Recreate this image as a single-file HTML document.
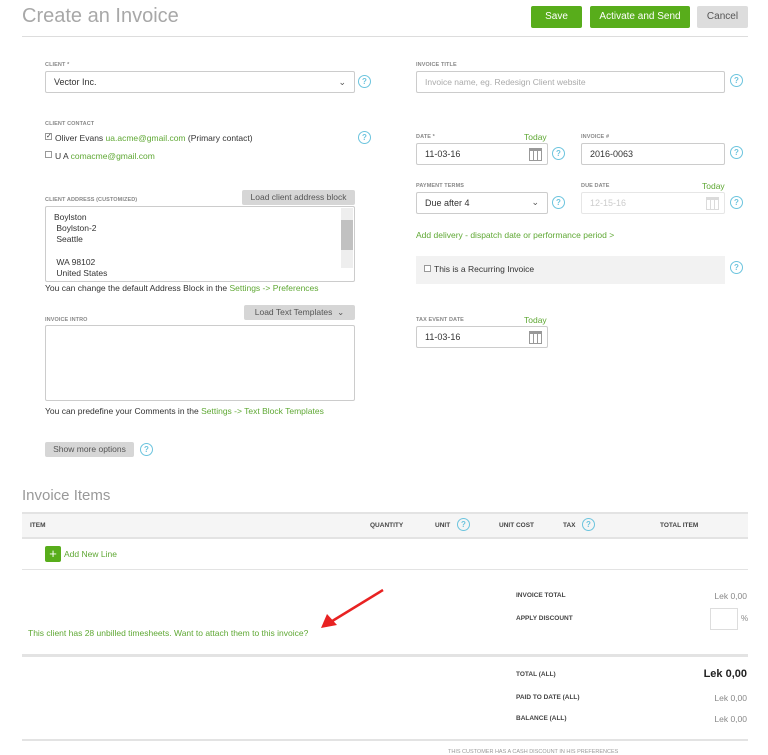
<!DOCTYPE html>
<html><head><meta charset="utf-8"><style>
*{box-sizing:border-box;margin:0;padding:0}
body{width:768px;height:754px;overflow:hidden;background:#fff;font-family:"Liberation Sans",sans-serif;color:#333;position:relative;font-size:9px}
.a{position:absolute;white-space:nowrap}
.lbl{position:absolute;font-size:5.5px;font-weight:bold;color:#888;letter-spacing:.1px}
.inp{position:absolute;border:1px solid #ccc;border-radius:2px;background:#fff;font-size:9px;padding-left:8px;display:flex;align-items:center}
.q{position:absolute;width:13px;height:13px;border:1.3px solid #6cc4de;border-radius:50%;color:#6cc4de;font-size:8px;font-weight:bold;text-align:center;line-height:11px}
.g{color:#5fa834}
.btn{position:absolute;border-radius:2px;color:#fff;font-size:10px;text-align:center;line-height:22px;height:22px}
.gb{position:absolute;background:#d6d6d6;border-radius:2px;color:#555;font-size:8.5px;text-align:center}
.th{position:absolute;font-size:6.5px;font-weight:bold;color:#444;top:522px}
.tl{position:absolute;font-size:6.5px;font-weight:bold;color:#444;left:516px}
.tv{position:absolute;right:21px;font-size:8.5px;color:#888}
.cal{position:absolute;width:13px;height:13px;border:1px solid #999;border-top-width:3px;background:repeating-linear-gradient(90deg,#fff 0 3px,#999 3px 4px)}
</style></head><body>
<div class="a" style="left:22px;top:5px;font-size:20px;color:#a8a8a8;font-weight:300">Create an Invoice</div>
<div class="a" style="left:22px;top:36px;width:726px;height:1px;background:#ddd"></div>
<div class="btn" style="left:531px;top:6px;width:51px;background:#58ad1b">Save</div>
<div class="btn" style="left:590px;top:6px;width:100px;background:#58ad1b">Activate and Send</div>
<div class="btn" style="left:697px;top:6px;width:51px;background:#ddd;color:#555">Cancel</div>

<div class="lbl" style="left:45px;top:62px">CLIENT *</div>
<div class="inp" style="left:45px;top:71px;width:310px;height:22px">Vector Inc.<span style="position:absolute;right:8px;top:5px;font-size:9px;color:#555">&#8964;</span></div>
<div class="q" style="left:358px;top:75px">?</div>
<div class="lbl" style="left:416px;top:62px">INVOICE TITLE</div>
<div class="inp" style="left:416px;top:71px;width:309px;height:22px;color:#aaa;font-size:8.5px">Invoice name, eg. Redesign Client website</div>
<div class="q" style="left:730px;top:74px">?</div>

<div class="lbl" style="left:45px;top:121px">CLIENT CONTACT</div>
<div class="a" style="left:45px;top:133px;width:7px;height:7px;border:1px solid #999;font-size:7px;line-height:5px">✓</div>
<div class="a" style="left:55px;top:133px;font-size:8.5px">Oliver Evans <span class="g">ua.acme@gmail.com</span> (Primary contact)</div>
<div class="a" style="left:45px;top:151px;width:7px;height:7px;border:1px solid #999"></div>
<div class="a" style="left:55px;top:151px;font-size:8.5px">U A <span class="g">comacme@gmail.com</span></div>
<div class="q" style="left:358px;top:131px">?</div>

<div class="lbl" style="left:45px;top:197px">CLIENT ADDRESS (CUSTOMIZED)</div>
<div class="gb" style="left:242px;top:190px;width:113px;height:15px;line-height:15px">Load client address block</div>
<div class="inp" style="left:45px;top:206px;width:310px;height:76px;display:block;padding:5px 8px;font-size:8.5px;line-height:11.2px">Boylston<br>&nbsp;Boylston-2<br>&nbsp;Seattle<br><br>&nbsp;WA 98102<br>&nbsp;United States
<div style="position:absolute;right:1px;top:1px;width:12px;height:60px;background:#eee"><div style="margin-top:12px;height:30px;background:#c1c1c1"></div></div></div>
<div class="a" style="left:45px;top:283px;font-size:8.5px">You can change the default Address Block in the <span class="g">Settings -&gt; Preferences</span></div>

<div class="lbl" style="left:45px;top:317px">INVOICE INTRO</div>
<div class="gb" style="left:244px;top:305px;width:111px;height:15px;line-height:15px">Load Text Templates &nbsp;&#8964;</div>
<div class="inp" style="left:45px;top:325px;width:310px;height:76px"></div>
<div class="a" style="left:45px;top:406px;font-size:8.5px">You can predefine your Comments in the <span class="g">Settings -&gt; Text Block Templates</span></div>
<div class="gb" style="left:45px;top:442px;width:89px;height:15px;line-height:15px">Show more options</div>
<div class="q" style="left:140px;top:443px">?</div>

<div class="lbl" style="left:416px;top:134px">DATE *</div>
<div class="a g" style="left:524px;top:132px;font-size:8.5px">Today</div>
<div class="inp" style="left:416px;top:143px;width:132px;height:22px">11-03-16<div class="cal" style="left:112px;top:4px"></div></div>
<div class="q" style="left:552px;top:147px">?</div>
<div class="lbl" style="left:581px;top:134px">INVOICE #</div>
<div class="inp" style="left:581px;top:143px;width:144px;height:22px">2016-0063</div>
<div class="q" style="left:730px;top:146px">?</div>

<div class="lbl" style="left:416px;top:183px">PAYMENT TERMS</div>
<div class="inp" style="left:416px;top:192px;width:132px;height:22px">Due after 4<span style="position:absolute;right:8px;top:4px;color:#555">&#8964;</span></div>
<div class="q" style="left:552px;top:196px">?</div>
<div class="lbl" style="left:581px;top:183px">DUE DATE</div>
<div class="a g" style="left:702px;top:181px;font-size:8.5px">Today</div>
<div class="inp" style="left:581px;top:192px;width:144px;height:22px;color:#ccc;border-color:#e6e6e6">12-15-16<div class="cal" style="left:124px;top:4px;opacity:.35"></div></div>
<div class="q" style="left:730px;top:196px">?</div>
<div class="a g" style="left:416px;top:230px;font-size:8.5px">Add delivery - dispatch date or performance period &gt;</div>
<div class="a" style="left:416px;top:256px;width:309px;height:28px;background:#f2f2f2"></div>
<div class="a" style="left:424px;top:265px;width:7px;height:7px;border:1px solid #999;background:#fff"></div>
<div class="a" style="left:434px;top:264px;font-size:8.5px">This is a Recurring Invoice</div>
<div class="q" style="left:730px;top:261px">?</div>

<div class="lbl" style="left:416px;top:317px">TAX EVENT DATE</div>
<div class="a g" style="left:524px;top:315px;font-size:8.5px">Today</div>
<div class="inp" style="left:416px;top:326px;width:132px;height:22px">11-03-16<div class="cal" style="left:112px;top:4px"></div></div>

<div class="a" style="left:22px;top:487px;font-size:15px;color:#999;font-weight:300">Invoice Items</div>
<div class="a" style="left:22px;top:512px;width:726px;height:27px;background:#f5f5f5;border-top:2px solid #e3e3e3;border-bottom:2px solid #e3e3e3"></div>
<div class="th" style="left:30px">ITEM</div>
<div class="th" style="left:370px">QUANTITY</div>
<div class="th" style="left:435px">UNIT</div>
<div class="q" style="left:457px;top:518px">?</div>
<div class="th" style="left:499px">UNIT COST</div>
<div class="th" style="left:563px">TAX</div>
<div class="q" style="left:582px;top:518px">?</div>
<div class="th" style="left:660px">TOTAL ITEM</div>
<div class="a" style="left:45px;top:546px;width:16px;height:16px;background:#58ad1b;border-radius:2px;color:#fff;font-size:13px;text-align:center;line-height:15px">+</div>
<div class="a g" style="left:64px;top:549px;font-size:8.5px">Add New Line</div>
<div class="a" style="left:22px;top:569px;width:726px;height:1px;background:#e3e3e3"></div>

<div class="tl" style="top:592px">INVOICE TOTAL</div><div class="tv" style="top:591px">Lek 0,00</div>
<div class="tl" style="top:615px">APPLY DISCOUNT</div>
<div class="a" style="left:710px;top:608px;width:28px;height:22px;border:1px solid #ddd"></div>
<div class="a" style="left:741px;top:614px;font-size:8px;color:#888">%</div>
<div class="a g" style="left:28px;top:628px;font-size:8.5px">This client has 28 unbilled timesheets. Want to attach them to this invoice?</div>
<svg class="a" style="left:315px;top:585px" width="75" height="48"><line x1="68" y1="5" x2="14" y2="38" stroke="#e82222" stroke-width="2.5"/><polygon points="6,43 12,29 22,40" fill="#e82222"/></svg>
<div class="a" style="left:22px;top:654px;width:726px;height:3px;background:#e3e3e3"></div>
<div class="tl" style="top:671px">TOTAL (ALL)</div><div class="tv" style="top:668px;font-size:11px;font-weight:bold;color:#222">Lek 0,00</div>
<div class="tl" style="top:694px">PAID TO DATE (ALL)</div><div class="tv" style="top:693px">Lek 0,00</div>
<div class="tl" style="top:715px">BALANCE (ALL)</div><div class="tv" style="top:714px">Lek 0,00</div>
<div class="a" style="left:22px;top:739px;width:726px;height:2px;background:#e3e3e3"></div>
<div class="a" style="left:448px;top:749px;font-size:5.5px;color:#999">THIS CUSTOMER HAS A CASH DISCOUNT IN HIS PREFERENCES</div>
</body></html>
